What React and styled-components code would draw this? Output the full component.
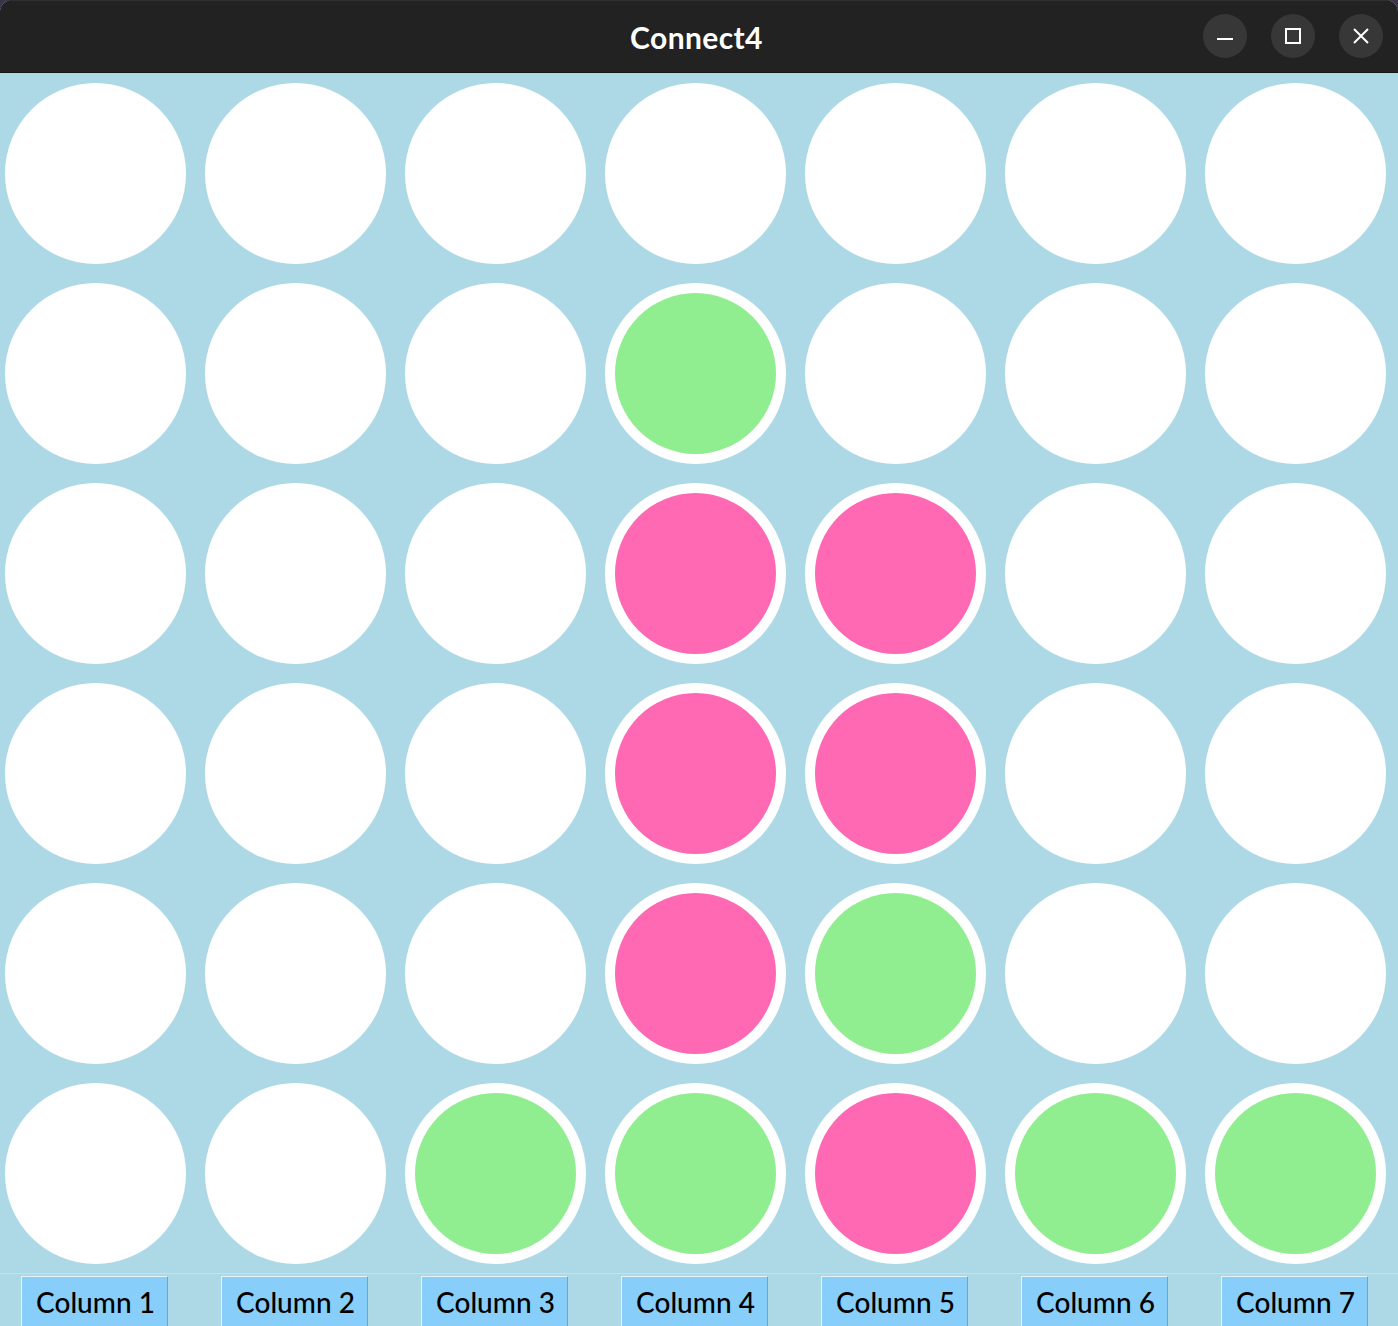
import React from "react";
import styled, { createGlobalStyle } from "styled-components";

const GlobalStyle = createGlobalStyle`
  html, body {
    margin: 0;
    padding: 0;
    background: #3b3446;
  }
  body {
    font-family: "Lato", "Noto Sans", sans-serif;
  }
`;

const Window = styled.div`
  width: 1398px;
  height: 1326px;
  display: flex;
  flex-direction: column;
  overflow: hidden;
  border-radius: 12px 12px 0 0;
  background: #add8e6;
`;

const TitleBar = styled.header`
  flex: 0 0 73px;
  display: grid;
  grid-template-columns: 1fr auto 1fr;
  align-items: center;
  background: #222222;
  border-top: 1px solid #2f2f2f;
  border-bottom: 1px solid #151515;
  box-sizing: border-box;
  padding: 0 15px 0 10px;
`;

const Title = styled.h1`
  grid-column: 2;
  margin: 0;
  color: #ffffff;
  font-family: "Lato", "Noto Sans", sans-serif;
  font-weight: 700;
  font-size: 30px;
  letter-spacing: 0.4px;
  line-height: 1;
`;

const Controls = styled.div`
  grid-column: 3;
  justify-self: end;
  display: flex;
  gap: 24px;
  margin-top: -2px;
`;

const ControlButton = styled.button`
  width: 44px;
  height: 44px;
  border-radius: 50%;
  border: none;
  padding: 0;
  background: #373737;
  display: grid;
  place-items: center;
  color: #ffffff;
`;

const Board = styled.main`
  flex: 0 0 1200px;
  box-sizing: border-box;
  padding: 10px 0 9px 5px;
  display: grid;
  grid-template-columns: repeat(7, 181px);
  grid-auto-rows: 181px;
  column-gap: 19px;
  row-gap: 19px;
  background: #add8e6;
`;

const Hole = styled.div`
  width: 181px;
  height: 181px;
  border-radius: 50%;
  background: #ffffff;
  display: grid;
  place-items: center;
`;

const Piece = styled.div`
  width: 161px;
  height: 161px;
  border-radius: 50%;
  background: ${(p) => (p.$player === "G" ? "#90ee90" : "#ff69b4")};
`;

const ButtonBar = styled.footer`
  flex: 1;
  display: flex;
  gap: 53px;
  padding: 2px 0 0 21px;
  border-top: 1px solid #d6dcdd;
  background: #add8e6;
`;

const ColumnButton = styled.button`
  width: 147px;
  height: 60px;
  box-sizing: border-box;
  background: #87cefa;
  border: 1px solid;
  border-color: #e6f3f7 #8a9ea6 #8a9ea6 #e6f3f7;
  padding: 0 0 8px 2px;
  font-family: "Lato", "Noto Sans", sans-serif;
  font-weight: 500;
  font-size: 28px;
  color: #000000;
  text-align: center;
  cursor: pointer;
`;

const board = [
  ".......",
  "...G...",
  "...PP..",
  "...PP..",
  "...PG..",
  "..GGPGG",
];

export default function App() {
  return (
    <>
      <GlobalStyle />
      <Window>
        <TitleBar>
          <Title>Connect4</Title>
          <Controls>
            <ControlButton aria-label="Minimize">
              <svg width="16" height="16" viewBox="0 0 16 16">
                <rect x="0" y="10" width="16" height="2" fill="#fff" />
              </svg>
            </ControlButton>
            <ControlButton aria-label="Maximize">
              <svg width="16" height="16" viewBox="0 0 16 16">
                <rect x="1" y="1" width="14" height="14" fill="none" stroke="#fff" strokeWidth="2" />
              </svg>
            </ControlButton>
            <ControlButton aria-label="Close">
              <svg width="16" height="16" viewBox="0 0 16 16">
                <path d="M1 1 L15 15 M15 1 L1 15" stroke="#fff" strokeWidth="2" />
              </svg>
            </ControlButton>
          </Controls>
        </TitleBar>
        <Board>
          {board.map((row, r) =>
            row.split("").map((c, i) => (
              <Hole key={`${r}-${i}`}>{c !== "." && <Piece $player={c} />}</Hole>
            ))
          )}
        </Board>
        <ButtonBar>
          {[1, 2, 3, 4, 5, 6, 7].map((n) => (
            <ColumnButton key={n}>Column {n}</ColumnButton>
          ))}
        </ButtonBar>
      </Window>
    </>
  );
}
